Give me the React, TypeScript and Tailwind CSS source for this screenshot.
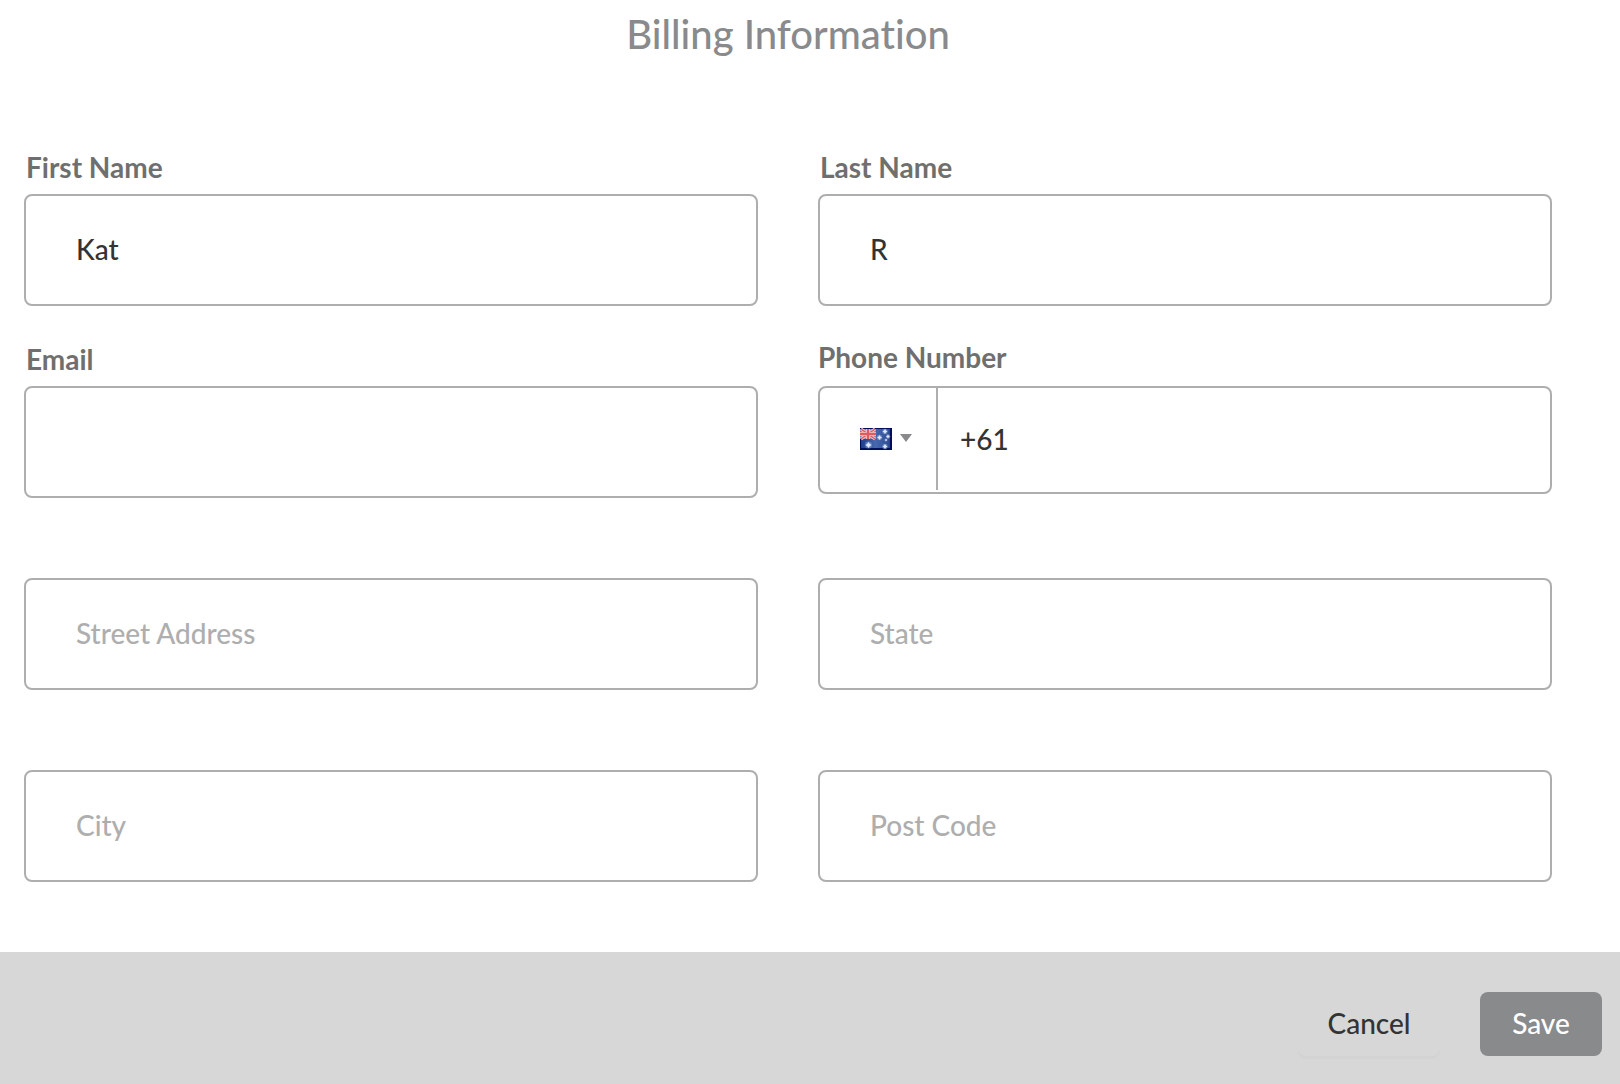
import { useId } from "react";

type FieldProps = {
  label: string;
  showLabel?: boolean;
  type?: string;
  defaultValue?: string;
};

const boxClass = "rounded-lg border-2 border-[#aeaeae] bg-white";

function Field({ label, showLabel = false, type = "text", defaultValue }: FieldProps) {
  const id = useId();
  return (
    <div className="flex flex-col">
      <div className="flex h-12 items-center pb-1.5 pl-0.5">
        {showLabel && (
          <label htmlFor={id} className="text-[28px] leading-8 font-bold text-[#6f6f6f]">
            {label}
          </label>
        )}
      </div>
      <input
        id={id}
        type={type}
        defaultValue={defaultValue}
        placeholder={showLabel ? undefined : label}
        aria-label={showLabel ? undefined : label}
        className={`${boxClass} h-28 w-full px-[50px] pb-0.5 text-[28px] font-medium text-[#333] outline-none placeholder:text-[#aeaeae] placeholder:opacity-100`}
      />
    </div>
  );
}

function Star({ x, y, r }: { x: number; y: number; r: number }) {
  return (
    <g>
      <circle cx={x} cy={y} r={r * 1.7} fill="#8ba3d6" opacity="0.55" />
      <path
        d={`M${x} ${y - r * 1.5}L${x + r * 0.6} ${y - r * 0.6}L${x + r * 1.5} ${y}L${x + r * 0.6} ${y + r * 0.6}L${x} ${y + r * 1.5}L${x - r * 0.6} ${y + r * 0.6}L${x - r * 1.5} ${y}L${x - r * 0.6} ${y - r * 0.6}Z`}
        fill="#dfe8fb"
      />
    </g>
  );
}

function AustralianFlag() {
  return (
    <svg width="32" height="22" viewBox="0 0 32 22" aria-hidden="true">
      <defs>
        <linearGradient id="field" x1="0" y1="0" x2="1" y2="0">
          <stop offset="0" stopColor="#1f3f88" />
          <stop offset="0.5" stopColor="#4768ae" />
          <stop offset="1" stopColor="#2b4b92" />
        </linearGradient>
        <filter id="soft" x="0" y="0" width="1" height="1">
          <feGaussianBlur stdDeviation="0.6" />
        </filter>
      </defs>
      <rect width="32" height="22" fill="#06105a" />
      <g filter="url(#soft)">
        <rect width="32" height="22" fill="#06105a" />
        <rect x="1" y="1" width="29" height="19" fill="url(#field)" />
        <rect x="0" y="1" width="16" height="10" fill="#7d83bb" />
        <path d="M1 1L15 11M15 1L1 11" stroke="#f3c6cb" strokeWidth="3" />
        <path d="M1 1L15 11M15 1L1 11" stroke="#dc5560" strokeWidth="1.2" />
        <path d="M8 1V11M0 6H16" stroke="#f4cdd0" strokeWidth="4" />
        <path d="M8 1V11M0 6H16" stroke="#e05a60" strokeWidth="2.4" />
        <Star x={8.5} y={17} r={2} />
        <Star x={25} y={3.5} r={1.6} />
        <Star x={19.5} y={9.5} r={1.6} />
        <Star x={28} y={8.5} r={1.3} />
        <Star x={26} y={12} r={0.9} />
        <Star x={25} y={18.5} r={1.6} />
      </g>
    </svg>
  );
}

function PhoneField() {
  const id = useId();
  return (
    <div className="flex flex-col">
      <div className="flex h-12 items-center pb-2.5">
        <label htmlFor={id} className="text-[28px] leading-8 font-bold text-[#6f6f6f]">
          Phone Number
        </label>
      </div>
      <div className={`${boxClass} flex h-[108px]`}>
        <button
          type="button"
          aria-label="Country: Australia"
          aria-haspopup="listbox"
          className="flex h-[102px] w-[118px] shrink-0 items-center gap-2 border-r-2 border-[#aeaeae] pl-10"
        >
          <AustralianFlag />
          <svg width="12" height="10" viewBox="0 0 12 10" aria-hidden="true">
            <path d="M0 0H12L6 8Z" fill="#898a8c" />
          </svg>
        </button>
        <input
          id={id}
          type="tel"
          defaultValue="+61"
          className="w-full min-w-0 rounded-r-lg bg-transparent px-[22px] pb-0.5 text-[28px] font-medium text-[#333] outline-none"
        />
      </div>
    </div>
  );
}

export default function App() {
  return (
    <form
      className="flex min-h-screen flex-col bg-white font-['Lato',sans-serif] [font-variant-ligatures:none]"
      onSubmit={(event) => event.preventDefault()}
    >
      <div className="grow pt-2.5 pr-[68px] pb-[70px] pl-6">
        <h1 className="text-center text-[40px] leading-12 font-medium text-[#898a8c]">
          Billing Information
        </h1>
        <div className="mt-[88px] grid grid-cols-2 gap-x-[60px] gap-y-8">
          <Field label="First Name" showLabel defaultValue="Kat" />
          <Field label="Last Name" showLabel defaultValue="R" />
          <Field label="Email" showLabel type="email" />
          <PhoneField />
          <Field label="Street Address" />
          <Field label="State" />
          <Field label="City" />
          <Field label="Post Code" />
        </div>
      </div>
      <footer className="flex justify-end gap-10 bg-[#d7d7d7] pt-10 pr-[18px] pb-7 text-[28px] font-medium">
        <button
          type="button"
          className="h-16 w-[142px] rounded-lg pb-0.5 text-[#333] shadow-[0_3px_1px_0_#d3d3d3]"
        >
          Cancel
        </button>
        <button type="submit" className="h-16 w-[122px] rounded-lg bg-[#898a8c] pb-0.5 text-white">
          Save
        </button>
      </footer>
    </form>
  );
}
